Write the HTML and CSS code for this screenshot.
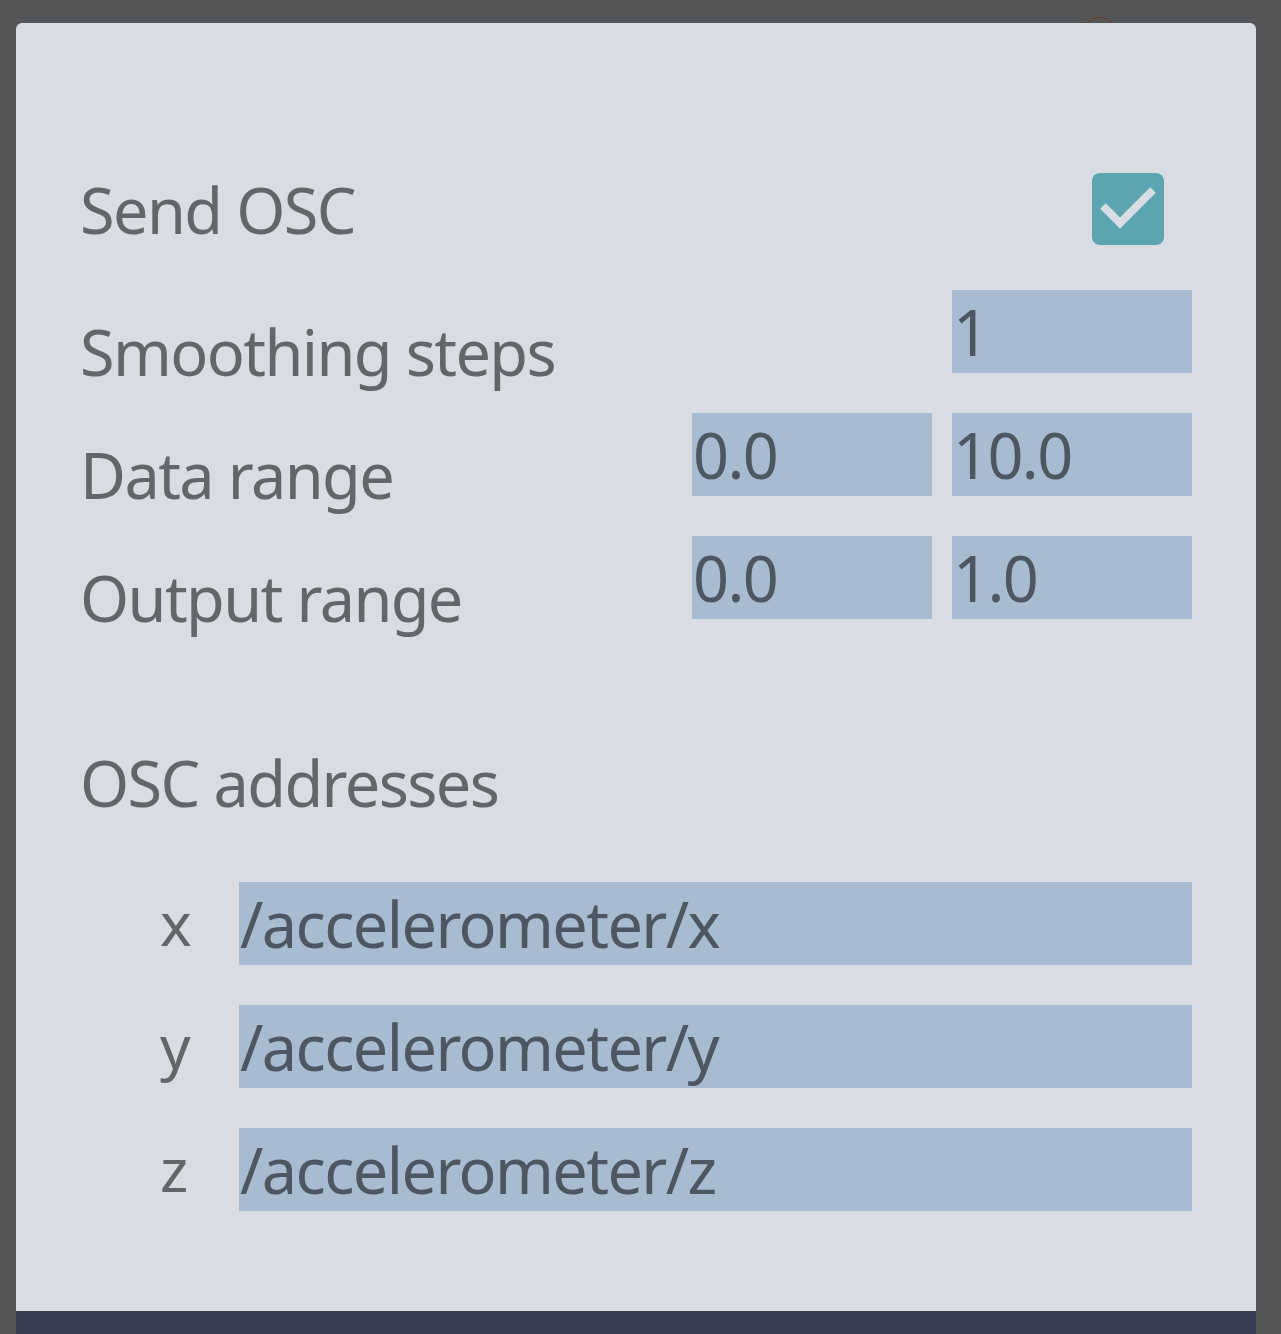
FILE: index.html
```html
<!DOCTYPE html>
<html>
<head>
<meta charset="utf-8">
<link rel="stylesheet" href="styles.css">
</head>
<body>
<div class="ring"></div>
<div class="dialog">
  <div class="content">
    <div class="row row-check">
      <div class="label">Send OSC</div>
      <div class="checkbox">
        <svg width="72" height="72" viewBox="0 0 72 72"><polyline points="11,33 28,50 61,17" fill="none" stroke="#d9dce3" stroke-width="8" stroke-linejoin="miter"/></svg>
      </div>
    </div>
    <div class="row">
      <div class="label">Smoothing steps</div>
      <div class="fields">
        <div class="field">1</div>
      </div>
    </div>
    <div class="row">
      <div class="label">Data range</div>
      <div class="fields">
        <div class="field">0.0</div>
        <div class="field">10.0</div>
      </div>
    </div>
    <div class="row">
      <div class="label">Output range</div>
      <div class="fields">
        <div class="field">0.0</div>
        <div class="field">1.0</div>
      </div>
    </div>
    <div class="section-title">OSC addresses</div>
    <div class="addr-list">
      <div class="addr"><span class="axis">x</span><div class="field wide">/accelerometer/x</div></div>
      <div class="addr"><span class="axis">y</span><div class="field wide">/accelerometer/y</div></div>
      <div class="addr"><span class="axis">z</span><div class="field wide">/accelerometer/z</div></div>
    </div>
  </div>
  <div class="bottom-bar"></div>
</div>
</body>
</html>
```
FILE: styles.css
```css
html, body {
  margin: 0;
  padding: 0;
}
body {
  background: #545557;
  font-family: "Noto Sans", "Open Sans", sans-serif;
  height: 1334px;
  overflow: hidden;
  position: relative;
}
.ring {
  position: absolute;
  left: 1082px;
  top: 17px;
  width: 34px;
  height: 34px;
  border: 1px solid #6a3d25;
  border-radius: 50%;
  box-sizing: border-box;
}
.dialog {
  position: relative;
  margin: 23px 0 0 16px;
  width: 1240px;
  height: 1311px;
  background: #d9dce3;
  border-radius: 6px 6px 0 0;
  display: flex;
  flex-direction: column;
}
.content {
  flex: 1;
  padding: 150px 64px 0 64px;
}
.row {
  display: flex;
  justify-content: space-between;
  align-items: flex-start;
  height: 83px;
  margin-top: 40px;
}
.row-check {
  margin-top: 0;
  height: 72px;
  align-items: center;
}
.row-check + .row {
  margin-top: 45px;
}
.label {
  font-size: 63px;
  line-height: 63px;
  color: #636569;
  margin-top: 30px;
  letter-spacing: -1.6px;
}
.row-check .label {
  margin-top: 0;
}
.checkbox {
  width: 72px;
  height: 72px;
  border-radius: 8px;
  background: #5aa5b0;
  margin-right: 28px;
}
.checkbox svg {
  display: block;
}
.fields {
  display: flex;
  gap: 20px;
}
.field {
  width: 240px;
  height: 83px;
  background: #a9bbd0;
  color: #4d5762;
  font-size: 63px;
  line-height: 83px;
  padding-left: 1px;
  box-sizing: border-box;
  white-space: nowrap;
  letter-spacing: -1.6px;
}
.field.wide {
  width: 953px;
}
.section-title {
  font-size: 63px;
  line-height: 63px;
  color: #636569;
  margin-top: 132px;
  letter-spacing: -1.6px;
}
.addr-list {
  margin-top: 68px;
  display: flex;
  flex-direction: column;
  gap: 40px;
}
.addr {
  display: flex;
  align-items: flex-start;
  padding-left: 80px;
}
.axis {
  width: 79px;
  font-size: 60px;
  line-height: 83px;
  color: #636569;
}
.bottom-bar {
  height: 23px;
  background: #383e50;
  flex: none;
}
```
